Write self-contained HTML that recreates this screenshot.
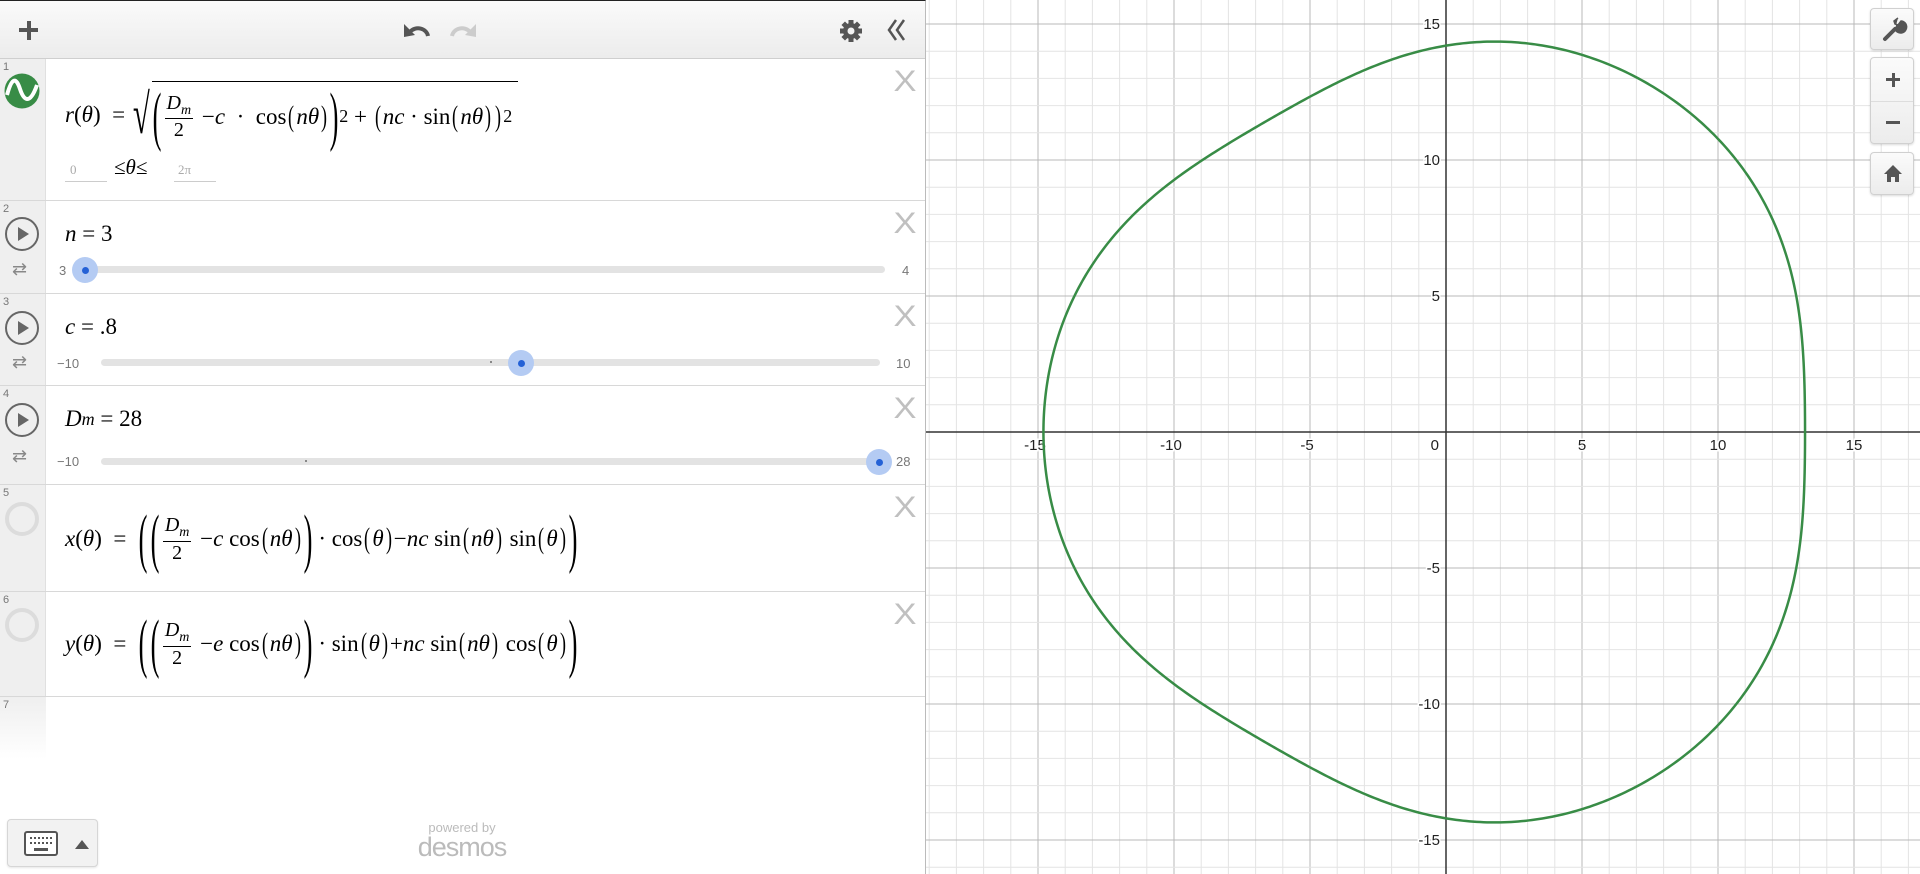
<!DOCTYPE html>
<html><head><meta charset="utf-8">
<style>
*{box-sizing:border-box;margin:0;padding:0}
body{width:1920px;height:874px;overflow:hidden;background:#fff;font-family:"Liberation Sans",sans-serif;position:relative}
#left{position:absolute;left:0;top:0;width:926px;height:874px;background:#fff;border-right:1px solid #bbb;border-top:1px solid #222}
#hdr{position:absolute;left:0;top:0;width:925px;height:58px;background:linear-gradient(#fafafa,#ececec);border-bottom:1px solid #cfcfcf}
.row{position:absolute;left:0;width:925px;border-bottom:1px solid #d8d8d8}
.gut{position:absolute;left:0;top:0;bottom:0;width:46px;background:#efefef;border-right:1px solid #e0e0e0}
.num{position:absolute;left:3px;top:2px;font-size:11px;color:#777}
.x{position:absolute;left:895px;font-size:30px;color:#c0c0c0;font-family:"Liberation Sans",sans-serif;transform:scaleX(1.15);line-height:1}
.m{position:absolute;left:65px;font-family:"Liberation Serif",serif;font-size:23px;color:#000;white-space:nowrap;display:flex;align-items:center}
.m i{font-style:italic}
.fr{display:inline-flex;flex-direction:column;align-items:center;font-size:20px;margin:0 3px;vertical-align:middle}
.fr .t{border-bottom:1px solid #000;padding:0 2px;line-height:1.1}
.fr .b{line-height:1.1}
.sub{font-size:14px;vertical-align:-5px;font-style:italic}
.bp{font-size:66px;line-height:1;transform:scaleX(.4);display:inline-block;margin:0 -6px}
.mp{font-size:30px;transform:scaleX(.6);display:inline-block}
.sup{font-size:18px;vertical-align:22px}
.play{position:absolute;left:5px;width:34px;height:34px;border:2px solid #666;border-radius:50%}
.play:after{content:"";position:absolute;left:11px;top:8px;border-left:11px solid #666;border-top:7px solid transparent;border-bottom:7px solid transparent}
.rep{position:absolute;left:12px;font-size:18px;color:#888}
.trk{position:absolute;height:7px;background:#e3e3e3;border-radius:4px}
.thumb{position:absolute;width:26px;height:26px;border-radius:50%;background:#b4cbf3}
.thumb:after{content:"";position:absolute;left:10px;top:10px;width:7px;height:7px;border-radius:50%;background:#2461d6}
.lbl{position:absolute;font-size:13px;color:#777}
.hol{position:absolute;left:5px;width:34px;height:34px;border:4px solid #dcdcdc;border-radius:50%}
.gb{position:absolute;left:1870px;width:44px;background:linear-gradient(#fbfbfb,#ececec);border:1px solid #d0d0d0;border-radius:4px;box-shadow:0 1px 2px rgba(0,0,0,.15);color:#555}
</style></head><body>
<svg id="g" width="994" height="874" style="position:absolute;left:926px;top:0"></svg>

<div class="gb" style="top:8px;height:42px"><svg width="44" height="42"><path d="M14 30 L24 20" stroke="#555" stroke-width="4" stroke-linecap="round"/><path d="M24 20 a6 6 0 1 0 6 -8 l-3 4 -3 -1 -1 -3 4 -3" fill="#555" stroke="#555" stroke-width="1.5"/></svg></div>
<div class="gb" style="top:57px;height:87px"><div style="position:absolute;left:0;right:0;top:43px;border-top:1px solid #ddd"></div>
<div style="position:absolute;left:15px;top:20px;width:14px;height:3px;background:#555"></div><div style="position:absolute;left:20.5px;top:14.5px;width:3px;height:14px;background:#555"></div>
<div style="position:absolute;left:15px;top:63px;width:14px;height:3px;background:#555"></div></div>
<div class="gb" style="top:152px;height:43px"><svg width="44" height="43"><path d="M22 12 L31 21 H28 V29 H24 V24 H20 V29 H16 V21 H13 Z" fill="#555"/></svg></div>

<div id="left">
<div id="hdr">
 <div style="position:absolute;left:19px;top:27px;width:19px;height:4px;background:#555"></div>
 <div style="position:absolute;left:26.5px;top:19.5px;width:4px;height:19px;background:#555"></div>
 <svg style="position:absolute;left:400px;top:17px" width="80" height="26"><path d="M10 14 A10 9 0 0 1 28 18" fill="none" stroke="#555" stroke-width="4"/><path d="M4 6 L4 19 L15 17Z" fill="#555"/><path d="M70 14 A10 9 0 0 0 52 18" fill="none" stroke="#ccc" stroke-width="4"/><path d="M76 6 L76 19 L65 17Z" fill="#ccc"/></svg>
 <svg style="position:absolute;left:838px;top:17px" width="26" height="26"><g fill="#555"><circle cx="13" cy="13" r="8"/><rect x="10.5" y="2" width="5" height="22"/><rect x="2" y="10.5" width="22" height="5"/><rect x="10.5" y="2" width="5" height="22" transform="rotate(45 13 13)"/><rect x="10.5" y="2" width="5" height="22" transform="rotate(-45 13 13)"/></g><circle cx="13" cy="13" r="3.5" fill="#f2f2f2"/></svg>
 <svg style="position:absolute;left:884px;top:16px" width="26" height="26"><path d="M12 3 L5 13 L12 23 M20 3 L13 13 L20 23" fill="none" stroke="#555" stroke-width="2.5"/></svg>
</div>

<div class="row" style="top:58px;height:142px"><div class="gut"></div><div class="num">1</div>
 <svg style="position:absolute;left:4px;top:14px" width="36" height="36" viewBox="0 0 36 36"><circle cx="18" cy="18" r="17.5" fill="#388c46"/><path d="M3 22 C8 4 12 4 16 16 S 26 32 33 12" fill="none" stroke="#fff" stroke-width="4"/></svg>
 <div class="x" style="top:8px">X</div>
 <div class="m" style="top:20px;height:72px"><i>r</i>(<i>θ</i>)&nbsp;&nbsp;=&nbsp;<span style="font-size:56px;transform:scaleX(.55);display:inline-block;margin:0 -5px">√</span><span style="border-top:1.5px solid #000;display:inline-flex;align-items:center;padding-top:2px"><span class="bp">(</span><span class="fr"><span class="t"><i>D</i><span class="sub">m</span></span><span class="b">2</span></span>&nbsp;− <i>c</i>&nbsp;&nbsp;·&nbsp;&nbsp;cos<span class="mp">(</span><i>nθ</i><span class="mp">)</span><span class="bp">)</span><span class="sup">2</span>&nbsp;+&nbsp;<span class="mp">(</span><i>nc</i>&nbsp;·&nbsp;sin<span class="mp">(</span><i>nθ</i><span class="mp">)</span><span class="mp">)</span><span class="sup">2</span>&nbsp;</span></div>
 <div style="position:absolute;left:65px;top:99px;width:42px;border-bottom:1px solid #ccc;font-family:'Liberation Serif';font-size:13px;color:#aaa;padding-left:5px;height:24px;line-height:24px">0</div>
 <div style="position:absolute;left:114px;top:96px;font-family:'Liberation Serif';font-size:21px">≤<i>θ</i>≤</div>
 <div style="position:absolute;left:174px;top:99px;width:42px;border-bottom:1px solid #ccc;font-family:'Liberation Serif';font-size:13px;color:#aaa;padding-left:4px;height:24px;line-height:24px">2π</div>
</div>

<div class="row" style="top:200px;height:93px"><div class="gut"></div><div class="num">2</div>
 <div class="play" style="top:16px"></div><div class="rep" style="top:58px">⇄</div>
 <div class="x" style="top:8px">X</div>
 <div class="m" style="top:20px"><i>n</i>&nbsp;=&nbsp;3</div>
 <div class="lbl" style="left:59px;top:62px">3</div><div class="trk" style="left:85px;width:800px;top:65px"></div><div class="thumb" style="left:72px;top:56px"></div><div class="lbl" style="left:902px;top:62px">4</div>
</div>

<div class="row" style="top:293px;height:92px"><div class="gut"></div><div class="num">3</div>
 <div class="play" style="top:17px"></div><div class="rep" style="top:58px">⇄</div>
 <div class="x" style="top:8px">X</div>
 <div class="m" style="top:20px"><i>c</i>&nbsp;=&nbsp;.8</div>
 <div class="lbl" style="left:57px;top:62px">−10</div><div class="trk" style="left:101px;width:779px;top:65px"></div><div style="position:absolute;left:490px;top:67px;width:2px;height:2px;background:#888"></div><div class="thumb" style="left:508px;top:56px"></div><div class="lbl" style="left:896px;top:62px">10</div>
</div>

<div class="row" style="top:385px;height:99px"><div class="gut"></div><div class="num">4</div>
 <div class="play" style="top:17px"></div><div class="rep" style="top:60px">⇄</div>
 <div class="x" style="top:8px">X</div>
 <div class="m" style="top:20px"><i>D</i><span class="sub" style="font-size:18px;vertical-align:-11px">m</span>&nbsp;=&nbsp;28</div>
 <div class="lbl" style="left:57px;top:68px">−10</div><div class="trk" style="left:101px;width:779px;top:72px"></div><div style="position:absolute;left:305px;top:74px;width:2px;height:2px;background:#888"></div><div class="thumb" style="left:866px;top:63px"></div><div class="lbl" style="left:896px;top:68px">28</div>
</div>

<div class="row" style="top:484px;height:107px"><div class="gut"></div><div class="num">5</div>
 <div class="hol" style="top:17px"></div>
 <div class="x" style="top:8px">X</div>
 <div class="m" style="top:22px;height:64px"><i>x</i>(<i>θ</i>)&nbsp;&nbsp;=&nbsp;&nbsp;<span class="bp">(</span><span class="bp" style="margin-left:-4px">(</span><span class="fr"><span class="t"><i>D</i><span class="sub">m</span></span><span class="b">2</span></span>&nbsp;− <i>c</i>&nbsp;cos<span class="mp">(</span><i>nθ</i><span class="mp">)</span><span class="bp">)</span>&nbsp;·&nbsp;cos<span class="mp">(</span><i>θ</i><span class="mp">)</span>−<i>nc</i>&nbsp;sin<span class="mp">(</span><i>nθ</i><span class="mp">)</span>&nbsp;sin<span class="mp">(</span><i>θ</i><span class="mp">)</span><span class="bp">)</span></div>
</div>

<div class="row" style="top:591px;height:105px"><div class="gut"></div><div class="num">6</div>
 <div class="hol" style="top:16px"></div>
 <div class="x" style="top:8px">X</div>
 <div class="m" style="top:20px;height:64px"><i>y</i>(<i>θ</i>)&nbsp;&nbsp;=&nbsp;&nbsp;<span class="bp">(</span><span class="bp" style="margin-left:-4px">(</span><span class="fr"><span class="t"><i>D</i><span class="sub">m</span></span><span class="b">2</span></span>&nbsp;− <i>e</i>&nbsp;cos<span class="mp">(</span><i>nθ</i><span class="mp">)</span><span class="bp">)</span>&nbsp;·&nbsp;sin<span class="mp">(</span><i>θ</i><span class="mp">)</span>+<i>nc</i>&nbsp;sin<span class="mp">(</span><i>nθ</i><span class="mp">)</span>&nbsp;cos<span class="mp">(</span><i>θ</i><span class="mp">)</span><span class="bp">)</span></div>
</div>

<div style="position:absolute;left:0;top:696px;width:46px;height:62px;background:linear-gradient(#efefef,#fff)"></div>
<div class="num" style="top:698px">7</div>

<div style="position:absolute;left:7px;top:818px;width:91px;height:48px;border:1px solid #d6d6d6;border-radius:4px;background:#f2f2f2;box-shadow:0 1px 2px rgba(0,0,0,.1)">
 <div style="position:absolute;left:16px;top:11px;width:34px;height:25px;border:2.5px solid #555;border-radius:3px;background:#fff"></div>
 <div style="position:absolute;left:22px;top:17px;width:22px;height:3px;border-top:2px dotted #555"></div>
 <div style="position:absolute;left:22px;top:22px;width:22px;height:3px;border-top:2px dotted #555"></div>
 <div style="position:absolute;left:26px;top:28px;width:14px;height:3px;background:#555"></div>
 <div style="position:absolute;left:67px;top:20px;border-bottom:9px solid #555;border-left:7px solid transparent;border-right:7px solid transparent"></div>
</div>
<div style="position:absolute;left:420px;top:820px;width:84px;text-align:center;color:#bbb;font-size:13px;line-height:14px">powered by</div>
<div style="position:absolute;left:410px;top:832px;width:104px;text-align:center;color:#bbb;font-size:27px;line-height:28px;letter-spacing:-1px">desmos</div>
</div>

<script>
(function(){
var s=document.getElementById('g'),W=994,H=874,ox=520,oy=432,u=27.2,h='';
for(var i=-20;i<=20;i++){var x=ox+i*u;if(x<0||x>W)continue;h+='<line x1="'+x+'" y1="0" x2="'+x+'" y2="'+H+'" stroke="'+(i%5==0?'#b8b8b8':'#e4e4e4')+'" stroke-width="1"/>';}
for(var j=-20;j<=20;j++){var y=oy-j*u;if(y<0||y>H)continue;h+='<line x1="0" y1="'+y+'" x2="'+W+'" y2="'+y+'" stroke="'+(j%5==0?'#b8b8b8':'#e4e4e4')+'" stroke-width="1"/>';}
h+='<line x1="'+ox+'" y1="0" x2="'+ox+'" y2="'+H+'" stroke="#333" stroke-width="1.5"/><line x1="0" y1="'+oy+'" x2="'+W+'" y2="'+oy+'" stroke="#333" stroke-width="1.5"/>';
var t='font-family="Liberation Sans" font-size="15" fill="#222" stroke="#fff" stroke-width="3" paint-order="stroke"';
[-15,-10,-5,5,10,15].forEach(function(v){h+='<text x="'+(ox+v*u-(v<0?3:0))+'" y="'+(oy+18)+'" text-anchor="middle" '+t+'>'+v+'</text>';h+='<text x="'+(ox-6)+'" y="'+(oy-v*u+5)+'" text-anchor="end" '+t+'>'+v+'</text>';});
h+='<text x="'+(ox-7)+'" y="'+(oy+18)+'" text-anchor="end" '+t+'>0</text>';
var d='';for(var k=0;k<=720;k++){var th=k/720*2*Math.PI,r=Math.sqrt(Math.pow(14-0.8*Math.cos(3*th),2)+Math.pow(2.4*Math.sin(3*th),2));d+=(k?'L':'M')+(ox+r*Math.cos(th)*u).toFixed(2)+' '+(oy-r*Math.sin(th)*u).toFixed(2);}
h+='<path d="'+d+'Z" fill="none" stroke="#388c46" stroke-width="2.5"/>';
s.innerHTML=h;})();
</script>
</body></html>
